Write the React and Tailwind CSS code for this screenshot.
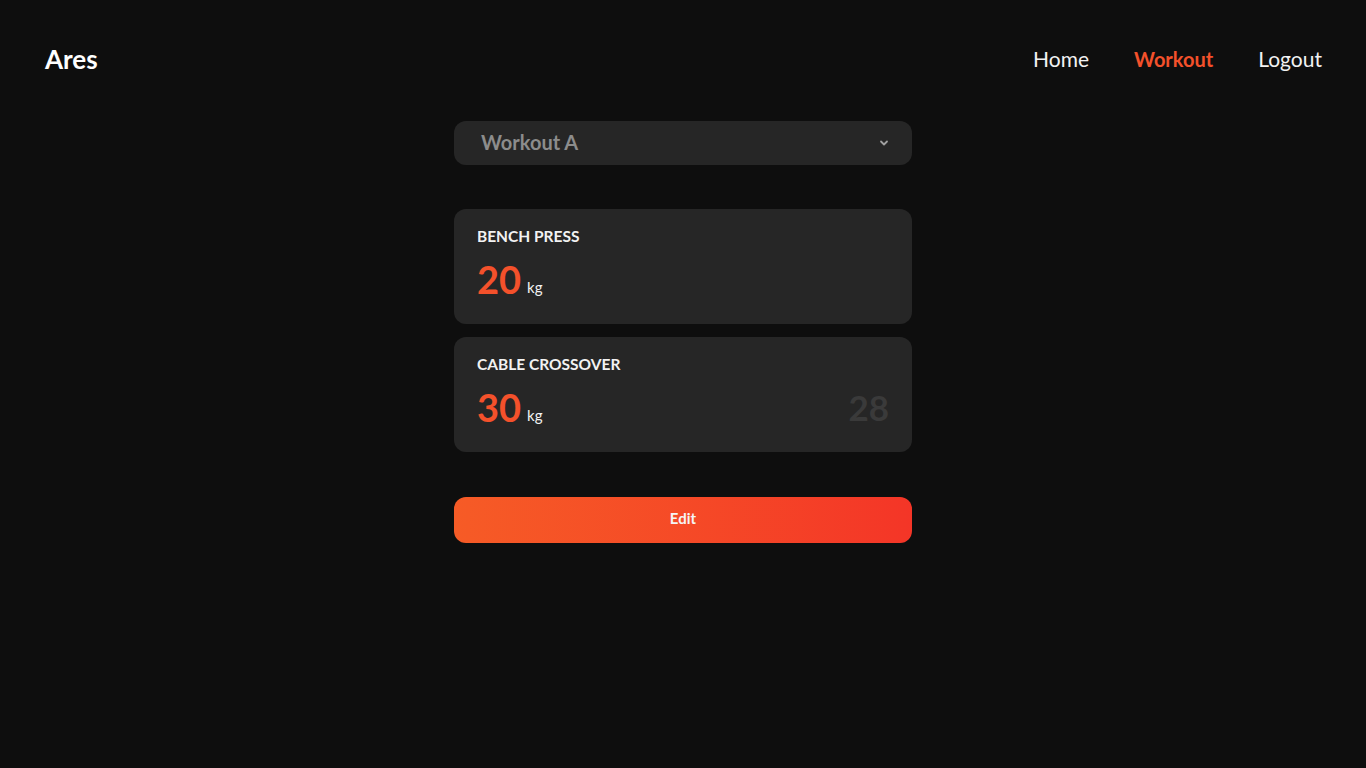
import React from "react";

export default function App() {
  const font = { fontFamily: "Lato, 'Noto Sans', sans-serif" };
  return (
    <div className="min-h-screen w-full bg-[#0e0e0e] text-white" style={font}>
      <header className="flex items-center justify-between pl-[45px] pr-[44px] pt-[40px]">
        <div className="text-[26px] font-bold leading-[38px]">Ares</div>
        <nav className="flex items-center gap-[45px] text-[21px] leading-[38px]">
          <a className="text-[#f2f2f2]">Home</a>
          <a className="text-[20px] font-bold text-[#f4512b]">Workout</a>
          <a className="text-[#f2f2f2]">Logout</a>
        </nav>
      </header>

      <main className="mx-auto mt-[43px] flex w-[458px] flex-col">
        <div className="flex h-[44px] items-center justify-between rounded-[12px] bg-[#262626] pl-[27px] pr-[22px]">
          <span className="mb-[2px] text-[20px] font-bold text-[#8c8c8c]">Workout A</span>
          <svg width="12" height="12" viewBox="0 0 12 12" fill="none">
            <path d="M3 4.5 L6 7.5 L9 4.5" stroke="#a0a0a0" strokeWidth="1.8" strokeLinecap="round" strokeLinejoin="round" />
          </svg>
        </div>

        <div className="mt-[44px] flex flex-col gap-[13px]">
          <Card title="BENCH PRESS" value="20" />
          <Card title="CABLE CROSSOVER" value="30" right="28" />
        </div>

        <button className="mt-[45px] flex h-[46px] items-center justify-center rounded-[12px] bg-gradient-to-r from-[#f65b26] to-[#f43527] pb-[3px] text-[15px] font-bold text-[#f5f5f5]">
          Edit
        </button>
      </main>
    </div>
  );
}

function Card({ title, value, right }) {
  return (
    <div className="flex h-[115px] flex-col rounded-[12px] bg-[#262626] px-[23px] pt-[16px]">
      <div className="text-[15.5px] font-bold text-[#f2f2f2]">{title}</div>
      <div className="mt-[9px] flex items-end justify-between">
        <div className="flex items-end">
          <span className="text-[38px] font-bold leading-[44px] text-[#f4512b]">{value}</span>
          <span className="mb-[3px] ml-[6px] text-[15px] text-[#f2f2f2]">kg</span>
        </div>
        {right && <span className="text-[35px] font-bold leading-[44px] text-[#3a3a3a]">{right}</span>}
      </div>
    </div>
  );
}
